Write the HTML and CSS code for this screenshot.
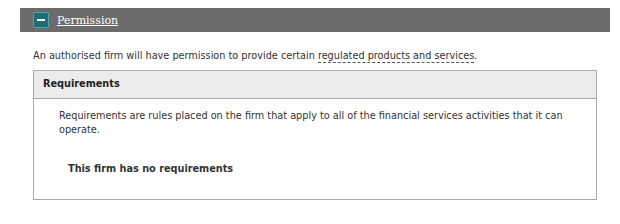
FILE: index.html
```html
<!DOCTYPE html>
<html lang="en">
  <head>
    <meta charset="UTF-8" />
    <title>Permission</title>
    <link rel="stylesheet" href="styles.css">
  </head>
  <body>
    <section class="panel">
      <div class="bar">
        <span class="toggle"><span class="minus"></span></span>
        <a href="#" class="bar-title">Permission</a>
      </div>
      <div class="inner">
        <p class="intro">An authorised firm will have permission to provide certain <span class="term">regulated products and services</span>.</p>
        <div class="box">
          <h3 class="box-head">Requirements</h3>
          <div class="box-body">
            <p class="desc">Requirements are rules placed on the firm that apply to all of the financial services activities that it can operate.</p>
            <p class="none">This firm has no requirements</p>
          </div>
        </div>
      </div>
    </section>
  </body>
</html>
```

FILE: styles.css
```css
* {
  margin: 0px;
  padding: 0px;
  box-sizing: border-box;
}
body {
  background-color: white;
  font-family: "DejaVu Sans Condensed", "DejaVu Sans", Verdana, sans-serif;
  font-size: 10.8px;
  color: #333;
  padding: 8px 10px 0 20px;
}
.bar {
  height: 24px;
  background-color: #6b6b6b;
  display: flex;
  align-items: center;
  padding-left: 13px;
}
.toggle {
  width: 16px;
  height: 16px;
  background-color: #1d6e76;
  border: 1px solid #5aa3a8;
  border-radius: 2px;
  display: flex;
  align-items: center;
  justify-content: center;
}
.minus {
  width: 8px;
  height: 2px;
  background-color: white;
}
.bar-title {
  margin-left: 8px;
  font-family: "DejaVu Serif", Georgia, serif;
  font-size: 11px;
  color: white;
  text-decoration: underline;
}
.inner {
  padding: 0 13px;
}
.intro {
  margin-top: 17px;
  line-height: 14px;
}
.term {
  border-bottom: 1px dashed #555;
}
.box {
  margin-top: 7px;
  border: 1px solid #aaa;
}
.box-head {
  background-color: #ececec;
  border-bottom: 1px solid #aaa;
  height: 28px;
  line-height: 26px;
  padding-left: 9px;
  font-size: 10.8px;
  font-weight: bold;
  color: #222;
}
.box-body {
  padding: 10px 20px 23px 25px;
  line-height: 14px;
}
.none {
  margin-top: 25px;
  padding-left: 9px;
  font-weight: bold;
}
```
